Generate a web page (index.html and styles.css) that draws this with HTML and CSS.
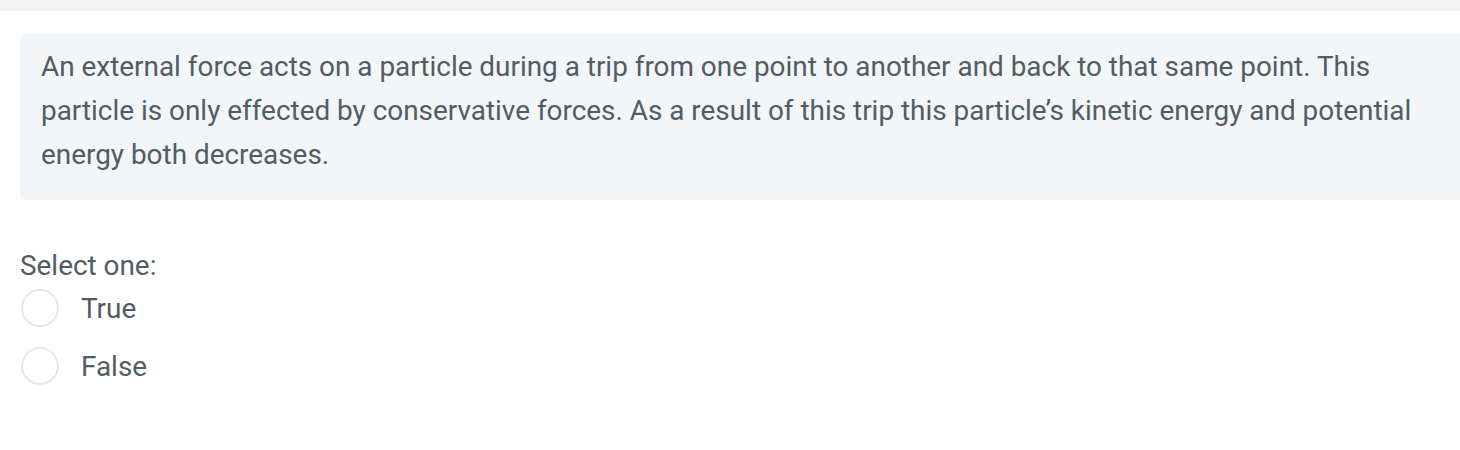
FILE: index.html
```html
<!DOCTYPE html>
<html>
<head>
<meta charset="utf-8">
<link rel="stylesheet" href="styles.css">
</head>
<body>
<div class="topbar"></div>
<div class="content">
  <div class="qtext">An external force acts on a particle during a trip from one point to another and back to that same point. This particle is only effected by conservative forces. As a result of this trip this particle’s kinetic energy and potential energy both decreases.</div>
  <div class="prompt">Select one:</div>
  <div class="answers">
    <label class="option"><span class="radio"></span><span class="label">True</span></label>
    <label class="option"><span class="radio"></span><span class="label">False</span></label>
  </div>
</div>
</body>
</html>
```
FILE: styles.css
```css
html, body {
  margin: 0;
  padding: 0;
  background: #ffffff;
  font-family: Roboto, "Liberation Sans", sans-serif;
  color: #515c65;
  overflow: hidden;
}
.topbar {
  height: 11px;
  background: #f2f3f5;
}
.content {
  padding: 23px 0 0 20px;
}
.qtext {
  background: #f2f6f9;
  border-radius: 5px;
  margin-right: -20px;
  padding: 11px 60px 23px 21px;
  font-size: 27.9px;
  line-height: 44px;
}
.prompt {
  margin-top: 44px;
  font-size: 27.9px;
  line-height: 44px;
}
.answers {
  display: flex;
  flex-direction: column;
  gap: 20px;
  padding-top: 1px;
}
.option {
  display: flex;
  align-items: center;
  height: 38px;
  font-size: 27.9px;
}
.radio {
  width: 34px;
  height: 34px;
  border: 2px solid #e3e7ea;
  border-radius: 50%;
  box-sizing: content-box;
  margin-left: 1px;
  flex: none;
}
.label {
  margin-left: 22px;
}
```
